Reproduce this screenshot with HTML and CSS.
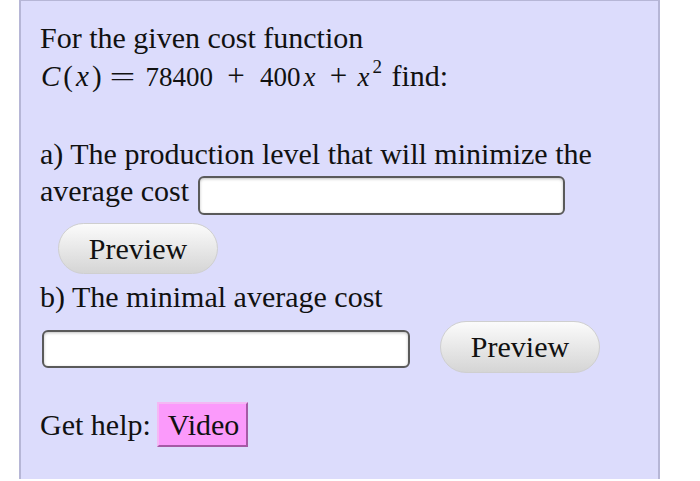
FILE: index.html
```html
<!DOCTYPE html>
<html>
<head>
<meta charset="utf-8">
<link rel="stylesheet" href="styles.css">
</head>
<body>
<div class="problem">
  <p class="intro">For the given cost function<br>
    <span class="math"><span class="fn"><i class="mc">C</i>(<i class="mx">x</i>)</span><span class="eq">=</span><span class="num">78400</span><span class="plus p1">+</span><span class="num n2">400<i class="mx mx2">x</i></span><span class="plus p2">+</span><i class="mx last">x</i><sup>2</sup></span> find:</p>
  <p class="qa">a) The production level that will minimize the<br>
    average cost <span class="ans ans-a"></span></p>
  <div class="row-a"><button class="preview">Preview</button></div>
  <p class="qb">b) The minimal average cost</p>
  <div class="row-b"><span class="ans ans-b"></span><button class="preview">Preview</button></div>
  <div class="help"><span class="help-label">Get help:</span><span class="video">Video</span></div>
</div>
</body>
</html>
```

FILE: styles.css
```css
html, body {
  margin: 0;
  padding: 0;
  background: #ffffff;
}
body {
  font-family: "Liberation Serif", "Times New Roman", serif;
  font-size: 30px;
  color: #111;
}
.problem {
  margin-left: 19px;
  width: 641px;
  height: 479px;
  box-sizing: border-box;
  background: #dcdcfc;
  border: 2px solid #b6b6d6;
  border-top-width: 1px;
  border-bottom: none;
  padding: 18px 0 0 19px;
}
p { margin: 0; }
.intro { line-height: 38px; }
.math { font-size: 27px; }
.math i { font-style: italic; font-family: "Liberation Serif", serif; }
.fn { font-size: 29px; margin-left: 1px; }
.mc { padding-right: 3px; }
.mx { padding: 0 3px; }
.mx2 { padding: 0 4px 0 3px; }
.eq {
  display: inline-block;
  width: 27px;
  margin-left: 7px;
  text-align: center;
  transform: scaleX(1.7);
}
.num { margin-left: 10px; }
.plus {
  display: inline-block;
  width: 20px;
  text-align: center;
  font-size: 31px;
  line-height: 0;
}
.p1 { margin-left: 13px; }
.n2 { margin-left: 14px; }
.p2 { margin-left: 9px; }
.last { margin-left: 6px; padding: 0 2px 0 3px; }
.math sup { font-size: 19px; line-height: 0; vertical-align: 13px; margin-left: 1px; margin-right: 2px; }
.qa { margin-top: 39px; line-height: 37px; }
.ans {
  display: inline-block;
  box-sizing: border-box;
  background: #fff;
  border: 2px solid #5a5a5a;
  border-radius: 6px;
  box-shadow: inset 0 1px 3px rgba(0,0,0,0.25);
}
.ans-a { width: 367px; height: 39px; vertical-align: -14px; margin-left: 1px; }
.row-a { margin-top: 8px; padding-left: 18px; }
.preview {
  font-family: "Liberation Serif", "Times New Roman", serif;
  font-size: 30px;
  color: #111;
  width: 160px;
  height: 51px;
  border: 1px solid #cfcfcf;
  border-radius: 26px;
  background: linear-gradient(#fbfbfb, #d5d5d5);
  padding: 0;
  display: block;
}
.qb { margin-top: 4px; line-height: 38px; }
.row-b { display: flex; align-items: flex-start; margin-top: 5px; gap: 30px; }
.row-b .preview { height: 52px; }
.ans-b { width: 368px; height: 38px; margin-top: 9px; margin-left: 2px; }
.help { margin-top: 29px; display: flex; align-items: baseline; gap: 6px; line-height: 38px; }
.video {
  display: inline-block;
  background: #fb9afb;
  padding: 5px 7px 5px 9px;
  border: 2px solid;
  border-color: #f4b8f4 #a55aa5 #a55aa5 #f4b8f4;
  line-height: 31px;
}
```
